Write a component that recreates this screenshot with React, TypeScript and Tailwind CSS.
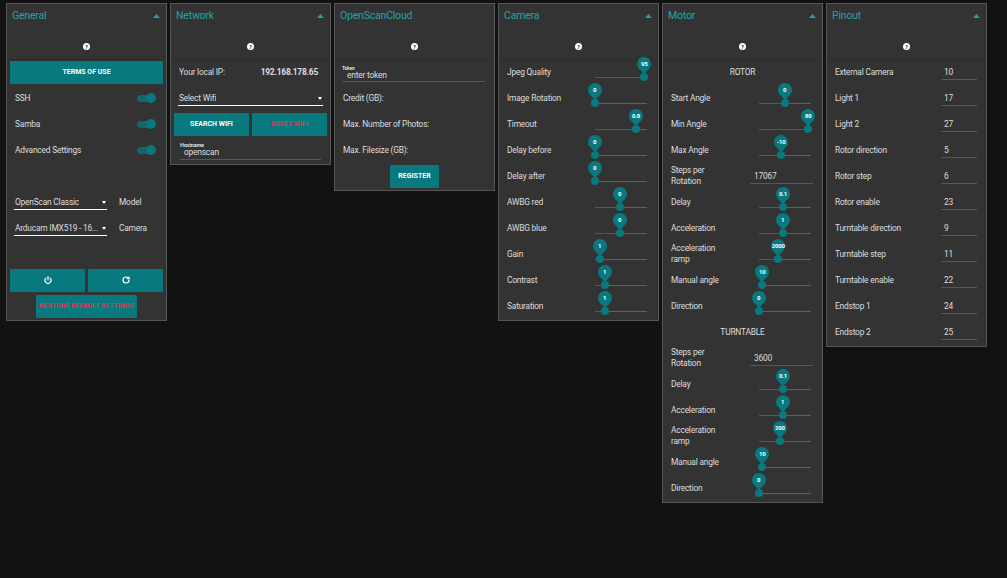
import React from "react";
import { Power, RotateCw } from "lucide-react";

function Caret({ className = "" }: { className?: string }) {
  return (
    <svg width="7" height="4" viewBox="0 0 7 4" className={className}>
      <path d="M0 4 L3.5 0 L7 4 Z" fill="#1f9fa8" />
    </svg>
  );
}

function Panel({ title, caret = true, children }: { title: string; caret?: boolean; children: React.ReactNode }) {
  return (
    <div className="w-[161px] shrink-0 border border-[#565656] bg-[#333333] pb-px">
      <div className="flex h-[24px] items-center justify-between pl-[5px] pr-[6px]">
        <span className="text-[10.5px] text-[#22a4ac]">{title}</span>
        {caret && <Caret />}
      </div>
      <div className="mx-[3px] flex h-[31px] items-center justify-center pt-[6px] shadow-[0_1px_1px_#2c2c2c]">
        <span className="flex h-[7px] w-[7px] items-center justify-center rounded-full bg-white text-[6px] font-bold leading-none text-[#333333]">?</span>
      </div>
      {children}
    </div>
  );
}

function Row({ children, className = "" }: { children?: React.ReactNode; className?: string }) {
  return <div className={`flex h-[26px] items-center ${className}`}>{children}</div>;
}

function Slider({ label, value, at, fill = true }: { label: React.ReactNode; value: string; at: number; fill?: boolean }) {
  return (
    <div className="relative flex h-[26px] items-center">
      <span className="w-[88px] shrink-0 pl-[8px] text-[8.4px] leading-[11px] text-[#dedede]">{label}</span>
      <div className="relative ml-[8px] mt-[10px] h-px w-[52px] bg-[#5f5f5f]">
        {fill && <div className="absolute left-0 top-0 h-px bg-[#08797f]" style={{ width: at }} />}
        <div className="absolute top-[-3.5px] h-[8px] w-[8px] rounded-full bg-[#08797f]" style={{ left: at - 4 }} />
        <div
          className="absolute top-[-20px] flex h-[14px] w-[14px] -rotate-45 items-center justify-center rounded-[50%_50%_50%_0] bg-[#08797f]"
          style={{ left: at - 7 }}
        >
          <span className="rotate-45 text-[6px] font-bold leading-none text-white">{value}</span>
        </div>
      </div>
    </div>
  );
}

function NumberField({ label, value }: { label: React.ReactNode; value: string }) {
  return (
    <Row>
      <span className="w-[87px] shrink-0 pl-[8px] text-[8.4px] leading-[11px] text-[#dedede]">{label}</span>
      <div className="mt-[2px] flex h-[14px] w-[63px] items-center border-b border-[#08797f] pl-[4px] text-[8.4px] text-[#dedede]">{value}</div>
    </Row>
  );
}

function PinField({ label, value }: { label: string; value: string }) {
  return (
    <Row>
      <span className="w-[114px] shrink-0 pl-[8px] text-[8.4px] text-[#dedede]">{label}</span>
      <div className="mt-[2px] flex h-[14px] w-[36px] items-center border-b border-[#08797f] pl-[3px] text-[8.4px] text-[#dedede]">{value}</div>
    </Row>
  );
}

function Select({ value, className }: { value: string; className: string }) {
  return (
    <div className={`mt-[1px] flex h-[14px] items-center justify-between border-b border-white pl-px pr-[1px] text-[8.4px] text-[#dedede] ${className}`}>
      <span className="truncate">{value}</span>
      <span className="h-0 w-0 shrink-0 border-x-[2.5px] border-t-[3px] border-x-transparent border-t-white" />
    </div>
  );
}

function Button({ children, className = "", danger = false }: { children: React.ReactNode; className?: string; danger?: boolean }) {
  return (
    <div
      className={`flex h-[23px] items-center justify-center whitespace-nowrap rounded-[1px] bg-[#08797f] text-[7px] font-bold uppercase tracking-normal ${
        danger ? "text-[#e2334a]" : "text-white"
      } ${className}`}
    >
      {children}
    </div>
  );
}

function Toggle({ label }: { label: string }) {
  return (
    <Row className="justify-between pr-[12px]">
      <span className="pl-[8px] text-[8.4px] text-[#dedede]">{label}</span>
      <span className="relative h-[7px] w-[17px] rounded-full bg-[#17666a]">
        <span className="absolute right-[-2px] top-[-1.5px] h-[10px] w-[10px] rounded-full bg-[#08797f]" />
      </span>
    </Row>
  );
}

export default function App() {
  return (
    <div
      className="flex min-h-[578px] w-[1007px] items-start gap-[3px] overflow-hidden bg-[#121212] pl-[6px] pt-[3px] tracking-[-0.2px]"
      style={{ fontFamily: "Roboto, 'Liberation Sans', sans-serif" }}
    >
      <Panel title="General">
        <Row className="px-[3px]">
          <Button className="w-[153px]">Terms of use</Button>
        </Row>
        <Toggle label="SSH" />
        <Toggle label="Samba" />
        <Toggle label="Advanced Settings" />
        <Row />
        <Row className="pl-[7px]">
          <Select value="OpenScan Classic" className="w-[93px]" />
          <span className="ml-[12px] text-[8.4px] text-[#dedede]">Model</span>
        </Row>
        <Row className="pl-[7px]">
          <Select value="Arducam IMX519 - 16..." className="w-[93px]" />
          <span className="ml-[12px] text-[8.4px] text-[#dedede]">Camera</span>
        </Row>
        <Row />
        <Row className="gap-[3px] px-[3px]">
          <Button className="w-[75px]"><Power size={8} strokeWidth={3.5} /></Button>
          <Button className="w-[75px]"><RotateCw size={8} strokeWidth={3.5} /></Button>
        </Row>
        <Row className="justify-center">
          <Button danger className="w-[101px]">Restore default settings</Button>
        </Row>
      </Panel>

      <Panel title="Network">
        <Row className="justify-between pl-[8px] pr-[12px] text-[8.4px] text-[#dedede]">
          <span>Your local IP:</span>
          <span className="font-bold">192.168.178.65</span>
        </Row>
        <Row className="px-[7px]">
          <Select value="Select Wifi" className="w-full" />
        </Row>
        <Row className="gap-[3px] px-[3px]">
          <Button className="w-[75px]">Search Wifi</Button>
          <Button danger className="w-[75px]">Reset Wifi</Button>
        </Row>
        <div className="mx-[9px] mt-[2px] h-[21px] border-b border-[#08797f] pt-[3px] text-[#dedede]">
          <div className="text-[5.5px] font-bold leading-[6px]">Hostname</div>
          <div className="pl-[4px] text-[8.4px] leading-[9px]">openscan</div>
        </div>
        <div className="h-[3px]" />
      </Panel>

      <Panel title="OpenScanCloud" caret={false}>
        <div className="ml-[7px] mr-[9px] flex h-[26px] flex-col justify-center">
          <div className="mt-[2px] h-[17px] border-b border-[#08797f] text-[#dedede]">
            <div className="text-[5px] font-bold leading-[6px]">Token</div>
            <div className="-mt-px pl-[5px] text-[8.4px] leading-[10px]">enter token</div>
          </div>
        </div>
        <Row><span className="pl-[8px] text-[8.4px] text-[#dedede]">Credit (GB):</span></Row>
        <Row><span className="pl-[8px] text-[8.4px] text-[#dedede]">Max. Number of Photos:</span></Row>
        <Row><span className="pl-[8px] text-[8.4px] text-[#dedede]">Max. Filesize (GB):</span></Row>
        <Row className="justify-center">
          <Button className="w-[49px]">Register</Button>
        </Row>
      </Panel>

      <Panel title="Camera">
        <Slider label="Jpeg Quality" value="95" at={49} />
        <Slider label="Image Rotation" value="0" at={0} fill={false} />
        <Slider label="Timeout" value="0.8" at={41} />
        <Slider label="Delay before" value="0" at={0} fill={false} />
        <Slider label="Delay after" value="0" at={0} fill={false} />
        <Slider label="AWBG red" value="0" at={25} />
        <Slider label="AWBG blue" value="0" at={25} />
        <Slider label="Gain" value="1" at={5} fill={false} />
        <Slider label="Contrast" value="1" at={10} />
        <Slider label="Saturation" value="1" at={10} />
      </Panel>

      <Panel title="Motor">
        <Row className="justify-center text-[8.4px] text-[#dedede]">ROTOR</Row>
        <Slider label="Start Angle" value="0" at={26} />
        <Slider label="Min Angle" value="80" at={49} />
        <Slider label="Max Angle" value="-10" at={22} />
        <NumberField label={<>Steps per<br />Rotation</>} value="17067" />
        <Slider label="Delay" value="0.1" at={24} />
        <Slider label="Acceleration" value="1" at={24} />
        <Slider label={<>Acceleration<br />ramp</>} value="2000" at={19} />
        <Slider label="Manual angle" value="10" at={3} fill={false} />
        <Slider label="Direction" value="0" at={0} fill={false} />
        <Row className="justify-center text-[8.4px] text-[#dedede]">TURNTABLE</Row>
        <NumberField label={<>Steps per<br />Rotation</>} value="3600" />
        <Slider label="Delay" value="0.1" at={24} />
        <Slider label="Acceleration" value="1" at={24} />
        <Slider label={<>Acceleration<br />ramp</>} value="200" at={21} />
        <Slider label="Manual angle" value="10" at={3} fill={false} />
        <Slider label="Direction" value="0" at={0} fill={false} />
      </Panel>

      <Panel title="Pinout">
        <PinField label="External Camera" value="10" />
        <PinField label="Light 1" value="17" />
        <PinField label="Light 2" value="27" />
        <PinField label="Rotor direction" value="5" />
        <PinField label="Rotor step" value="6" />
        <PinField label="Rotor enable" value="23" />
        <PinField label="Turntable direction" value="9" />
        <PinField label="Turntable step" value="11" />
        <PinField label="Turntable enable" value="22" />
        <PinField label="Endstop 1" value="24" />
        <PinField label="Endstop 2" value="25" />
      </Panel>
    </div>
  );
}
